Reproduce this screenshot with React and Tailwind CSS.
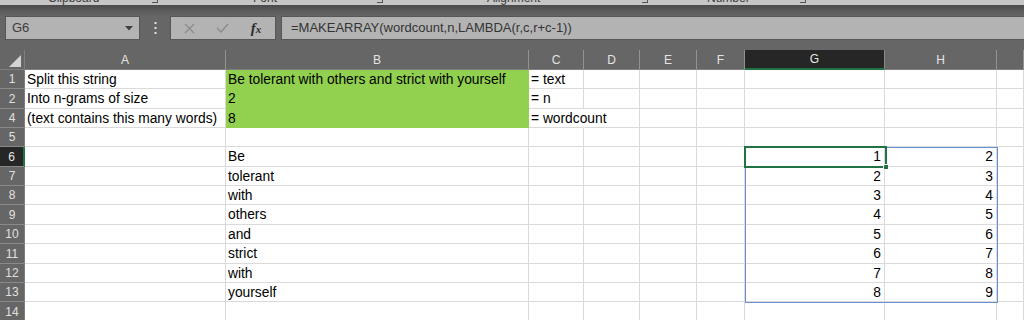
import React from "react";

const FONT = "font-['Liberation_Sans',Arial,sans-serif]";

const cols = [
  { k: "A", w: 201 },
  { k: "B", w: 303 },
  { k: "C", w: 55 },
  { k: "D", w: 56 },
  { k: "E", w: 57 },
  { k: "F", w: 48 },
  { k: "G", w: 140 },
  { k: "H", w: 112 },
  { k: "I", w: 0 },
];

const words = ["Be", "tolerant", "with", "others", "and", "strict", "with", "yourself"];

const rows = [
  { n: 1, A: "Split this string", B: "Be tolerant with others and strict with yourself", C: "= text", green: true },
  { n: 2, A: "Into n-grams of size", B: "2", C: "= n", green: true },
  { n: 4, A: "(text contains this many words)", B: "8", C: "= wordcount", green: true },
  { n: 5 },
  ...words.map((w, i) => ({
    n: 6 + i,
    B: w,
    G: String(i + 1),
    H: String(i + 2),
  })),
  { n: 14 },
];

function Cell({ row, col }) {
  const val = row[col.k];
  const isGreen = row.green && col.k === "B";
  const numeric = col.k === "G" || col.k === "H";
  const spill = row.n === 4 && col.k === "C";
  return (
    <div
      className={
        "border-r border-b whitespace-nowrap text-[13.8px] leading-[18px] pt-[1px] text-black " +
        (isGreen
          ? "bg-[#92d050] border-[#92d050] "
          : spill
          ? "bg-white border-b-[#dadada] border-r-white "
          : "bg-white border-[#dadada] ") +
        (numeric ? "text-right pr-[3px]" : "pl-[2px]")
      }
    >
      {val ? <span className="relative z-10">{val}</span> : null}
    </div>
  );
}

export default function App() {
  return (
    <div className={"w-[1024px] h-[320px] overflow-hidden bg-[#666666] " + FONT}>
      {/* ribbon bottom strip (cut off) */}
      <div className="relative h-[5px] bg-[#c6c6c6] overflow-hidden text-[12px] leading-[12px] text-[#3c3c3c]">
        <span className="absolute left-[48px] top-[-8px]">Clipboard</span>
        <span className="absolute left-[152px] top-[0px] w-[6px] h-[3px] border-r border-b border-[#555]" />
        <span className="absolute left-[253px] top-[-8px]">Font</span>
        <span className="absolute left-[377px] top-[0px] w-[6px] h-[3px] border-r border-b border-[#555]" />
        <span className="absolute left-[487px] top-[-8px]">Alignment</span>
        <span className="absolute left-[642px] top-[0px] w-[6px] h-[3px] border-r border-b border-[#555]" />
        <span className="absolute left-[707px] top-[-8px]">Number</span>
        <span className="absolute left-[800px] top-[0px] w-[6px] h-[3px] border-r border-b border-[#555]" />
      </div>

      {/* formula bar area */}
      <div className="h-[45px] pt-[11px] bg-[linear-gradient(#4a4a4a,#5c5c5c_6px,#666666_11px)]">
        <div className="flex items-center h-[24px]">
          {/* name box */}
          <div className="ml-[5px] w-[135px] h-[24px] bg-[#b3b3b3] border border-[#575757] flex items-center justify-between pl-[6px] pr-[6px]">
            <span className="text-[13px] text-[#3d3d3d]">G6</span>
            <svg width="8" height="5" viewBox="0 0 8 5">
              <polygon points="0,0 8,0 4,4.5" fill="#404040" />
            </svg>
          </div>
          {/* dots */}
          <div className="w-[30px] flex justify-center">
            <svg width="3" height="12" viewBox="0 0 3 12">
              <rect x="0.5" y="0" width="2" height="2" fill="#e0e0e0" />
              <rect x="0.5" y="5" width="2" height="2" fill="#e0e0e0" />
              <rect x="0.5" y="10" width="2" height="2" fill="#e0e0e0" />
            </svg>
          </div>
          {/* fx box */}
          <div className="w-[106px] h-[24px] bg-[#b3b3b3] border border-[#575757] flex items-center">
            <div className="w-[34px] flex justify-center pl-[2px]">
              <svg width="11" height="11" viewBox="0 0 11 11">
                <path d="M1 1 L10 10 M10 1 L1 10" stroke="#8a8a8a" strokeWidth="1.3" fill="none" />
              </svg>
            </div>
            <div className="w-[34px] flex justify-center">
              <svg width="13" height="10" viewBox="0 0 13 10">
                <path d="M1 5 L5 9 L12 1" stroke="#8a8a8a" strokeWidth="1.4" fill="none" />
              </svg>
            </div>
            <div className="w-[34px] flex justify-center">
              <span className="font-['Liberation_Serif',serif] italic font-bold text-[15px] text-[#2e2e2e] leading-none">
                f<span className="text-[11px]">x</span>
              </span>
            </div>
          </div>
          {/* formula input */}
          <div className="ml-[5px] flex-1 h-[24px] bg-[#b3b3b3] border-y border-l border-[#575757] flex items-center pl-[9px]">
            <span className="text-[13px] text-[#333333] whitespace-nowrap">
              =MAKEARRAY(wordcount,n,LAMBDA(r,c,r+c-1))
            </span>
          </div>
        </div>
      </div>

      {/* sheet grid */}
      <div className="relative">
        <div className="grid grid-cols-[25px_201px_303px_55px_56px_57px_48px_140px_112px_1fr] grid-rows-[20px_19px_20px_19px_19px_20px_19px_19px_20px_19px_20px_19px_19px_20px]">
          {/* header row */}
          <div className="bg-[#666666] border-r border-b border-[#7e7e7e] flex items-end justify-end pr-[3px] pb-[2px]">
            <svg width="12" height="12" viewBox="0 0 12 12">
              <polygon points="12,0 12,12 0,12" fill="#d4d4d4" />
            </svg>
          </div>
          {cols.map((c) => (
            <div
              key={c.k}
              className={
                "flex items-center justify-center text-[12px] border-r " +
                (c.k === "G"
                  ? "bg-[#262626] text-[#e8e8e8] border-b-2 border-b-[#217346] border-r-[#8a8a8a] "
                  : "bg-[#666666] text-[#e4e4e4] border-b border-b-[#7e7e7e] border-r-[#929292]")
              }
            >
              {c.k === "I" ? "" : c.k}
            </div>
          ))}

          {rows.map((r) => (
            <React.Fragment key={r.n}>
              <div
                className={
                  "flex items-center justify-center text-[12px] border-b " +
                  (r.n === 6
                    ? "bg-[#262626] text-[#e8e8e8] border-r-2 border-r-[#217346] border-b-[#8a8a8a]"
                    : "bg-[#666666] text-[#e0e0e0] border-r border-r-[#7e7e7e] border-b-[#8a8a8a]")
                }
              >
                {r.n}
              </div>
              {cols.map((c) => (
                <Cell key={c.k} row={r} col={c} />
              ))}
            </React.Fragment>
          ))}
        </div>

        {/* selected range G6:H13 */}
        <div className="absolute left-[745px] top-[97px] w-[253px] h-[156px] border border-[#6b8fd4] pointer-events-none z-20" />
        {/* active cell G6 */}
        <div className="absolute left-[744px] top-[96px] w-[143px] h-[22px] border-2 border-[#217346] pointer-events-none z-20" />
        {/* fill handle */}
        <div className="absolute left-[883px] top-[114px] w-[6px] h-[6px] bg-[#217346] border border-white pointer-events-none z-30" />
      </div>
    </div>
  );
}
